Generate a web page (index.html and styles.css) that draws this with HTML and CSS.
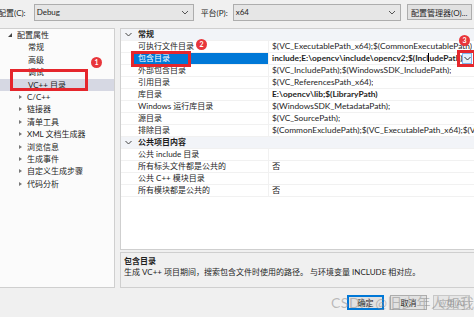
FILE: index.html
```html
<!DOCTYPE html>
<html lang="zh-CN">
  <head>
    <meta charset="UTF-8" />
    <title>属性页</title>
    <link rel="stylesheet" href="styles.css">
  </head>
  <body>
    <div class="topbar">
      <span class="lbl first">配置(C):</span>
      <div class="combo combo-cfg"><span>Debug</span><svg width="8" height="5" viewBox="0 0 8 5"><path d="M1 1l3 3 3-3" fill="none" stroke="#555" stroke-width="1"/></svg></div>
      <span class="lbl">平台(P):</span>
      <div class="combo combo-plat"><span>x64</span><svg width="8" height="5" viewBox="0 0 8 5"><path d="M1 1l3 3 3-3" fill="none" stroke="#555" stroke-width="1"/></svg></div>
      <button class="btn-mgr">配置管理器(O)...</button>
    </div>

    <div class="main">
      <div class="tree">
        <div class="node root"><span class="tri-open"></span>配置属性</div>
        <div class="node leaf">常规</div>
        <div class="node leaf">高级</div>
        <div class="node leaf">调试</div>
        <div class="node leaf sel">VC++ 目录</div>
        <div class="node"><span class="tri"></span>C/C++</div>
        <div class="node"><span class="tri"></span>链接器</div>
        <div class="node"><span class="tri"></span>清单工具</div>
        <div class="node"><span class="tri"></span>XML 文档生成器</div>
        <div class="node"><span class="tri"></span>浏览信息</div>
        <div class="node"><span class="tri"></span>生成事件</div>
        <div class="node"><span class="tri"></span>自定义生成步骤</div>
        <div class="node"><span class="tri"></span>代码分析</div>
      </div>

      <div class="right">
        <div class="grid">
          <div class="row cat"><span class="gut"><svg width="7" height="5" viewBox="0 0 7 5"><path d="M0.5 1l3 3 3-3" fill="none" stroke="#444" stroke-width="1"/></svg></span><span class="name">常规</span><span class="val"></span></div>
          <div class="row"><span class="gut"></span><span class="name">可执行文件目录</span><span class="val">$(VC_ExecutablePath_x64);$(CommonExecutablePath)</span></div>
          <div class="row active"><span class="gut"></span><span class="name">包含目录</span><span class="val bold">include;E:\opencv\include\opencv2;$(Incl<i class="caret"></i>udePath)</span><span class="dd"><svg width="7" height="5" viewBox="0 0 7 5"><path d="M0.5 1l3 3 3-3" fill="none" stroke="#333" stroke-width="1"/></svg></span></div>
          <div class="row"><span class="gut"></span><span class="name">外部包含目录</span><span class="val">$(VC_IncludePath);$(WindowsSDK_IncludePath);</span></div>
          <div class="row"><span class="gut"></span><span class="name">引用目录</span><span class="val">$(VC_ReferencesPath_x64);</span></div>
          <div class="row"><span class="gut"></span><span class="name">库目录</span><span class="val bold">E:\opencv\lib;$(LibraryPath)</span></div>
          <div class="row"><span class="gut"></span><span class="name">Windows 运行库目录</span><span class="val">$(WindowsSDK_MetadataPath);</span></div>
          <div class="row"><span class="gut"></span><span class="name">源目录</span><span class="val">$(VC_SourcePath);</span></div>
          <div class="row"><span class="gut"></span><span class="name">排除目录</span><span class="val">$(CommonExcludePath);$(VC_ExecutablePath_x64);$(VC_LibraryPath_x64)</span></div>
          <div class="row cat"><span class="gut"><svg width="7" height="5" viewBox="0 0 7 5"><path d="M0.5 1l3 3 3-3" fill="none" stroke="#444" stroke-width="1"/></svg></span><span class="name">公共项目内容</span><span class="val"></span></div>
          <div class="row"><span class="gut"></span><span class="name">公共 include 目录</span><span class="val"></span></div>
          <div class="row"><span class="gut"></span><span class="name">所有标头文件都是公共的</span><span class="val">否</span></div>
          <div class="row"><span class="gut"></span><span class="name">公共 C++ 模块目录</span><span class="val"></span></div>
          <div class="row"><span class="gut"></span><span class="name">所有模块都是公共的</span><span class="val">否</span></div>
        </div>
        <div class="desc">
          <div class="desc-title">包含目录</div>
          <div>生成 VC++ 项目期间，搜索包含文件时使用的路径。 与环境变量 INCLUDE 相对应。</div>
        </div>
      </div>
    </div>

    <div class="footer">
      <button class="btn default">确定</button>
      <button class="btn">取消</button>
      <button class="btn disabled">应用(A)</button>
    </div>

    <!-- annotations drawn over the dialog -->
    <div class="mark mark1"></div>
    <div class="mark mark2"></div>
    <div class="mark mark3"></div>
    <span class="badge b1">1</span>
    <span class="badge b2">2</span>
    <span class="badge b3">3</span>
    <div class="watermark">CSDN @旧少年人如我乐</div>
  </body>
</html>
```
FILE: styles.css
```css
body {
  margin: 0;
  width: 474px;
  height: 317px;
  overflow: hidden;
  position: relative;
  background: #f0f0f0;
  font-family: Lato, "Noto Sans CJK SC", sans-serif;
  font-size: 8px;
  color: #1e1e1e;
}

/* top bar with configuration / platform */
.topbar {
  height: 24px;
  display: flex;
  align-items: center;
  white-space: nowrap;
}
.lbl { margin-right: 5px; }
.lbl.first { margin-left: -2px; margin-right: 8px; }
.combo {
  height: 17px;
  box-sizing: border-box;
  border: 1px solid #adadad;
  background: #e6e6e6;
  display: flex;
  align-items: center;
  justify-content: space-between;
  padding: 0 4px 0 2px;
}
.combo-cfg { width: 160px; margin-right: 7px; }
.combo-plat { width: 168px; margin-right: 6px; }
.btn-mgr {
  font: inherit;
  height: 16px;
  width: 65px;
  padding: 0;
  border: 1px solid #adadad;
  background: #e1e1e1;
  color: #1e1e1e;
  white-space: nowrap;
}

.main {
  display: flex;
  margin-top: 4px;
  height: 260px;
}

/* left tree */
.tree {
  width: 115px;
  box-sizing: border-box;
  background: #fbfbfb;
  border: 1px solid #cfcfcf;
  border-left: none;
  margin-right: 5px;
}
.node {
  height: 12.4px;
  line-height: 12.4px;
  padding-left: 19px;
  white-space: nowrap;
  position: relative;
}
.node.root { padding-left: 17px; }
.node.leaf { padding-left: 28px; }
.node.sel { background: #d6d8e3; }
.tri-open {
  position: absolute;
  left: 8px;
  top: 4px;
  width: 0;
  height: 0;
  border-left: 4px solid transparent;
  border-bottom: 4px solid #444;
}
.tri {
  display: inline-block;
  width: 0;
  height: 0;
  border-top: 2.5px solid transparent;
  border-bottom: 2.5px solid transparent;
  border-left: 3px solid #777;
  margin-right: 5px;
  vertical-align: 1px;
}

/* property grid */
.right {
  flex: 1;
  display: flex;
  flex-direction: column;
  min-width: 0;
}
.grid {
  height: 222px;
  box-sizing: border-box;
  background: #fff;
  border: 1px solid #cfcfcf;
  border-right: none;
  overflow: hidden;
}
.row {
  display: flex;
  height: 12px;
  box-sizing: border-box;
  border-bottom: 1px solid #f1f1f1;
  line-height: 11px;
  white-space: nowrap;
  position: relative;
}
.gut {
  width: 10px;
  flex: none;
  display: flex;
  align-items: center;
  justify-content: center;
  padding-left: 2px;
}
.name {
  width: 136px;
  flex: none;
  box-sizing: border-box;
  padding-left: 5px;
  border-right: 1px solid #f1f1f1;
  overflow: hidden;
}
.val {
  padding-left: 3px;
  font-size: 8.4px;
  overflow: hidden;
}
.bold { font-weight: bold; }
.cat { background: #f2f4f8; }
.cat .name { font-weight: bold; border-right: none; }
.active .name { background: #0078d7; color: #fff; }
.caret {
  display: inline-block;
  width: 1px;
  height: 9px;
  background: #000;
  vertical-align: -1px;
}
.dd {
  position: absolute;
  right: 2px;
  top: 0;
  width: 10px;
  height: 11px;
  box-sizing: border-box;
  border: 1px solid #7eb4ea;
  background: #e5f1fb;
  display: flex;
  align-items: center;
  justify-content: center;
}

.desc {
  margin-top: 2px;
  height: 36px;
  box-sizing: border-box;
  border: 1px solid #cfcfcf;
  border-right: none;
  padding: 3px 3px;
  line-height: 11px;
  white-space: nowrap;
}
.desc-title { font-weight: bold; }

/* dialog buttons */
.footer {
  display: flex;
  justify-content: flex-end;
  gap: 6px;
  padding: 7px 4px 0 0;
}
.btn {
  font: inherit;
  width: 37px;
  height: 15px;
  padding: 0;
  border: 1px solid #adadad;
  background: #e1e1e1;
  color: #1e1e1e;
  white-space: nowrap;
}
.btn.default { border: 2px solid #0078d7; }
.btn.disabled { color: #a0a0a0; border-color: #c8c8c8; background: #e6e6e6; }

/* red annotation boxes and numbered badges */
.mark {
  position: absolute;
  border: 3px solid #e5262c;
  box-sizing: border-box;
}
.mark1 { left: 10px; top: 69px; width: 78px; height: 22px; }
.mark2 { left: 131px; top: 51px; width: 60px; height: 16px; }
.mark3 { left: 457px; top: 50px; width: 19px; height: 17px; }
.badge {
  position: absolute;
  width: 11px;
  height: 11px;
  border-radius: 50%;
  background: #e8363b;
  color: #fff;
  font-size: 7px;
  font-weight: bold;
  line-height: 11px;
  text-align: center;
}
.b1 { left: 91px; top: 57px; }
.b2 { left: 196px; top: 39px; }
.b3 { left: 459px; top: 35px; }

.watermark {
  position: absolute;
  left: 331px;
  top: 292px;
  font-size: 14px;
  color: rgba(140, 140, 140, 0.55);
  white-space: nowrap;
  letter-spacing: 0.5px;
}
```
